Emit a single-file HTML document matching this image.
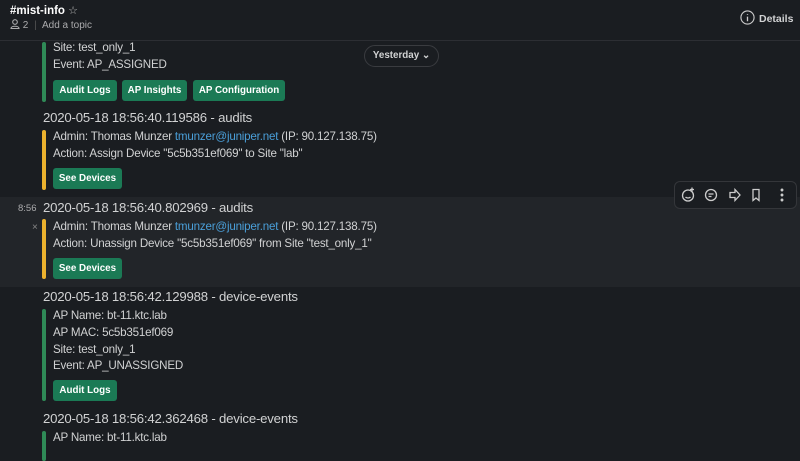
<!DOCTYPE html>
<html><head><style>
*{margin:0;padding:0;box-sizing:border-box}
body{width:800px;height:451px;overflow:hidden;background:#1a1d21;font-family:"Liberation Sans",sans-serif;color:#d1d2d3;position:relative}
.a{position:absolute;white-space:nowrap}
.h{font-size:13.2px;letter-spacing:-0.2px;color:#d1d2d3}
.t{font-size:11.6px;letter-spacing:-0.2px;color:#d1d2d3}
.bar{position:absolute;left:42px;width:4px;border-radius:2px}
.g{background:#2f8a57}
.y{background:#ecb22e}
.btn{position:absolute;height:21px;background:#1b7a55;border-radius:3px;color:#fff;font-size:9.8px;font-weight:bold;line-height:21px;text-align:center;white-space:nowrap}
.lk{color:#4a9fd9}
</style></head><body>
<div class="a" style="left:10px;top:4px;font-size:11.5px;font-weight:bold;color:#fff">#mist-info <span style="font-weight:normal;color:#bbb;font-size:11px">☆</span></div>
<div class="a" style="left:10px;top:19px;font-size:10px;color:#ababad">
<svg width="10" height="10" viewBox="0 0 10 10" style="vertical-align:-1px"><circle cx="5" cy="3" r="2.3" fill="none" stroke="#ababad" stroke-width="1.1"/><path d="M1 9.5c0-3 8-3 8 0z" fill="none" stroke="#ababad" stroke-width="1.1"/></svg> 2 <span style="color:#555;margin:0 3px">|</span> Add a topic</div>
<div class="a" style="left:740px;top:10px;font-size:10.5px;color:#d1d2d3;font-weight:bold">
<svg width="15" height="15" viewBox="0 0 16 16" style="vertical-align:-3px;margin-right:4px"><circle cx="8" cy="8" r="7" fill="none" stroke="#ccc" stroke-width="1.2"/><path d="M8 7v5M8 4.2v.8" stroke="#ccc" stroke-width="1.4"/></svg>Details</div>
<div class="a" style="left:0;top:40px;width:800px;height:1px;background:#2c2e33"></div>

<div class="bar g" style="top:42px;height:60px"></div>
<div class="a t" style="left:53px;top:41px">Site: test_only_1</div>
<div class="a t" style="left:53px;top:58px">Event: AP_ASSIGNED</div>
<div class="btn" style="left:53px;top:80px;width:64px">Audit Logs</div>
<div class="btn" style="left:122px;top:80px;width:65px">AP Insights</div>
<div class="btn" style="left:193px;top:80px;width:92px">AP Configuration</div>
<div class="a" style="left:364px;top:45px;width:75px;height:22px;border:1px solid #3a3c40;border-radius:11px;background:#1a1d21;font-size:9.8px;font-weight:bold;text-align:center;line-height:20px;color:#d1d2d3">Yesterday ⌄</div>

<div class="a h" style="left:43px;top:110px">2020-05-18 18:56:40.119586 - audits</div>
<div class="bar y" style="top:130px;height:60px"></div>
<div class="a t" style="left:53px;top:130px">Admin: Thomas Munzer <span class="lk">tmunzer@juniper.net</span> (IP: 90.127.138.75)</div>
<div class="a t" style="left:53px;top:147px">Action: Assign Device "5c5b351ef069" to Site "lab"</div>
<div class="btn" style="left:53px;top:168px;width:69px">See Devices</div>

<div class="a" style="left:0;top:197px;width:800px;height:90px;background:#222529"></div>
<div class="a" style="left:18px;top:203px;font-size:9.5px;color:#ababad">8:56</div>
<div class="a h" style="left:43px;top:200px">2020-05-18 18:56:40.802969 - audits</div>
<div class="a" style="left:32px;top:222px;font-size:10px;color:#888">×</div>
<div class="bar y" style="top:219px;height:60px"></div>
<div class="a t" style="left:53px;top:220px">Admin: Thomas Munzer <span class="lk">tmunzer@juniper.net</span> (IP: 90.127.138.75)</div>
<div class="a t" style="left:53px;top:237px">Action: Unassign Device "5c5b351ef069" from Site "test_only_1"</div>
<div class="btn" style="left:53px;top:258px;width:69px">See Devices</div>

<div class="a" style="left:674px;top:181px;width:123px;height:28px;border:1px solid #34363a;border-radius:6px;background:#1a1d21"></div>
<svg class="a" style="left:674px;top:181px" width="123" height="28" viewBox="0 0 123 28" fill="none" stroke="#ccc" stroke-width="1.3">
<circle cx="14" cy="14.5" r="5.5"/><path d="M11.5 16c1 1.3 4 1.3 5 0"/><path d="M18 6.5v4M16 8.5h4"/>
<circle cx="37" cy="14" r="5.5"/><path d="M34.5 13h5M34.5 15.5h3"/>
<path d="M56 11.5h5v-3l5 5.5-5 5.5v-3h-5z"/>
<path d="M79 8.5h6v11l-3-2.5-3 2.5z"/>
<circle cx="108" cy="9" r=".8" fill="#ccc"/><circle cx="108" cy="14" r=".8" fill="#ccc"/><circle cx="108" cy="19" r=".8" fill="#ccc"/>
</svg>

<div class="a h" style="left:43px;top:289px">2020-05-18 18:56:42.129988 - device-events</div>
<div class="bar g" style="top:309px;height:92px"></div>
<div class="a t" style="left:53px;top:309px">AP Name: bt-11.ktc.lab</div>
<div class="a t" style="left:53px;top:326px">AP MAC: 5c5b351ef069</div>
<div class="a t" style="left:53px;top:343px">Site: test_only_1</div>
<div class="a t" style="left:53px;top:359px">Event: AP_UNASSIGNED</div>
<div class="btn" style="left:53px;top:380px;width:64px">Audit Logs</div>

<div class="a h" style="left:43px;top:411px">2020-05-18 18:56:42.362468 - device-events</div>
<div class="bar g" style="top:431px;height:30px"></div>
<div class="a t" style="left:53px;top:431px">AP Name: bt-11.ktc.lab</div>
</body></html>
